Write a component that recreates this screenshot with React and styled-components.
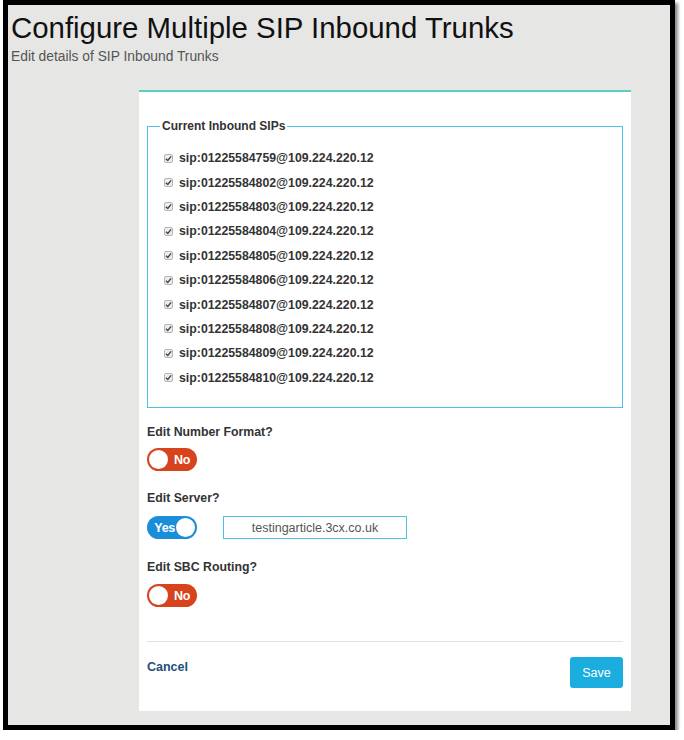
import React from 'react';
import styled, { createGlobalStyle } from 'styled-components';

const GlobalStyle = createGlobalStyle`
  html, body {
    margin: 0;
    padding: 0;
    background: #ffffff;
  }
  body {
    font-family: "Liberation Sans", Arial, sans-serif;
  }
  * {
    box-sizing: border-box;
  }
`;

const Frame = styled.div`
  margin-left: 3px;
  width: 672px;
  height: 730px;
  border: 5px solid #000;
  box-shadow: 3px 3px 3px rgba(0, 0, 0, 0.45);
  background: #e6e6e5;
  padding: 0 0 0 3px;
  display: flex;
  flex-direction: column;
`;

const Title = styled.h1`
  margin: 6px 0 0;
  font-size: 29.4px;
  font-weight: 400;
  line-height: 34px;
  color: #111;
`;

const Subtitle = styled.div`
  margin-top: 4px;
  font-size: 13.8px;
  line-height: 16px;
  color: #555;
`;

const Card = styled.div`
  margin: 25px 0 0 128px;
  width: 492px;
  height: 621px;
  background: #fff;
  border-top: 2px solid #5ccfbd;
  padding: 27px 8px 23px 8px;
  display: flex;
  flex-direction: column;
`;

const Fieldset = styled.fieldset`
  margin: 0;
  padding: 13px 16px 17px 15px;
  border: 1px solid #4fc1e9;
  height: 290px;
`;

const Legend = styled.legend`
  margin-left: -3px;
  padding: 0 2px;
  font-size: 12px;
  font-weight: 700;
  line-height: 14px;
  color: #333;
`;

const SipRow = styled.div`
  display: flex;
  align-items: center;
  height: 24.4px;
  gap: 6px;
  font-size: 12.3px;
  font-weight: 700;
  color: #333;
`;

const Check = styled.span`
  width: 9px;
  height: 9px;
  margin-left: 1px;
  border: 1px solid #b5b5b5;
  border-radius: 2px;
  background: #ededed;
  display: flex;
  align-items: center;
  justify-content: center;
`;

const Group = styled.div`
  margin-top: ${p => p.$top}px;
`;

const Label = styled.div`
  font-size: 12.3px;
  font-weight: 700;
  line-height: 16px;
  color: #333;
`;

const Controls = styled.div`
  display: flex;
  align-items: center;
  margin-top: ${p => p.$gap}px;
  gap: 26px;
`;

const Toggle = styled.div`
  width: 50px;
  height: 23px;
  border-radius: 12px;
  background: ${p => (p.$on ? '#1a8ed8' : '#d6431d')};
  display: flex;
  flex-direction: ${p => (p.$on ? 'row-reverse' : 'row')};
  align-items: center;
  padding: 0 2px;
  gap: ${p => (p.$on ? '1px' : '6px')};
`;

const Knob = styled.span`
  width: 19px;
  height: 19px;
  border-radius: 50%;
  background: #fff;
  flex: none;
`;

const ToggleText = styled.span`
  font-size: 12.5px;
  font-weight: 700;
  color: #fff;
  letter-spacing: -0.3px;
  padding-left: ${p => (p.$on ? '3px' : '0')};
`;

const TextInput = styled.div`
  width: 184px;
  height: 23px;
  border: 1px solid #4fc1e9;
  font-size: 12.5px;
  color: #555;
  display: flex;
  align-items: center;
  justify-content: center;
`;

const Divider = styled.hr`
  margin: 34px 0 0;
  border: none;
  border-top: 1px solid #e2e2e2;
`;

const Footer = styled.div`
  margin-top: 15px;
  display: flex;
  justify-content: space-between;
  align-items: flex-start;
`;

const CancelLink = styled.a`
  margin-top: 3px;
  font-size: 12.5px;
  font-weight: 700;
  color: #1f4f7b;
  text-decoration: none;
`;

const SaveButton = styled.button`
  width: 53px;
  height: 31px;
  border: none;
  border-radius: 3px;
  background: #1badde;
  color: #fff;
  font-family: inherit;
  font-size: 12.5px;
`;

const sips = [
  '01225584759', '01225584802', '01225584803', '01225584804', '01225584805',
  '01225584806', '01225584807', '01225584808', '01225584809', '01225584810',
];

function Switch({ on }) {
  return (
    <Toggle $on={on}>
      <Knob />
      <ToggleText $on={on}>{on ? 'Yes' : 'No'}</ToggleText>
    </Toggle>
  );
}

export default function App() {
  return (
    <>
      <GlobalStyle />
      <Frame>
        <Title>Configure Multiple SIP Inbound Trunks</Title>
        <Subtitle>Edit details of SIP Inbound Trunks</Subtitle>
        <Card>
          <Fieldset>
            <Legend>Current Inbound SIPs</Legend>
            {sips.map(n => (
              <SipRow key={n}>
                <Check>
                  <svg width="7" height="7" viewBox="0 0 8 8">
                    <path d="M1 4.2 L3.2 6.3 L7 1.5" fill="none" stroke="#444" strokeWidth="1.6" />
                  </svg>
                </Check>
                sip:{n}@109.224.220.12
              </SipRow>
            ))}
          </Fieldset>

          <Group $top={16}>
            <Label>Edit Number Format?</Label>
            <Controls $gap={8}>
              <Switch on={false} />
            </Controls>
          </Group>

          <Group $top={19}>
            <Label>Edit Server?</Label>
            <Controls $gap={10}>
              <Switch on />
              <TextInput>testingarticle.3cx.co.uk</TextInput>
            </Controls>
          </Group>

          <Group $top={20}>
            <Label>Edit SBC Routing?</Label>
            <Controls $gap={9}>
              <Switch on={false} />
            </Controls>
          </Group>

          <Divider />
          <Footer>
            <CancelLink href="#">Cancel</CancelLink>
            <SaveButton>Save</SaveButton>
          </Footer>
        </Card>
      </Frame>
    </>
  );
}
